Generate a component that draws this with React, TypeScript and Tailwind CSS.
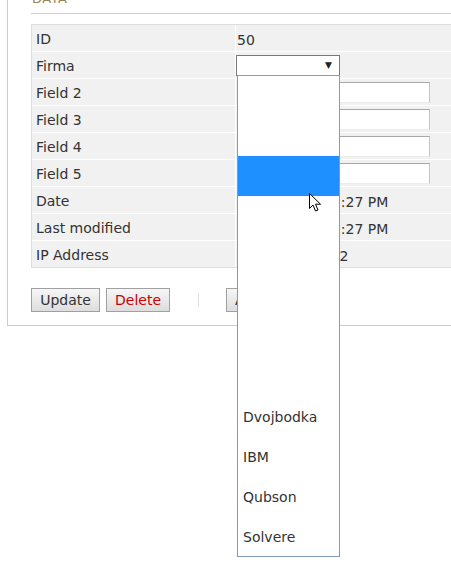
import React from "react";

const rows: { label: string; kind: "text" | "select" | "input" | "date"; value?: string }[] = [
  { label: "ID", kind: "text", value: "50" },
  { label: "Firma", kind: "select" },
  { label: "Field 2", kind: "input" },
  { label: "Field 3", kind: "input" },
  { label: "Field 4", kind: "input" },
  { label: "Field 5", kind: "input" },
  { label: "Date", kind: "date", value: "4/8/2016 9:51:27 PM" },
  { label: "Last modified", kind: "date", value: "4/8/2016 9:51:27 PM" },
  { label: "IP Address", kind: "text", value: "192.168.10.112" },
];

const options = ["", "", "", "", "", "", "", "", "Dvojbodka", "IBM", "Qubson", "Solvere"];

export default function App() {
  return (
    <div className="relative w-[451px] h-[573px] overflow-hidden bg-white font-['DejaVu_Sans',sans-serif] text-[14px] text-[#333]">
      <div className="ml-[7px] mt-[-9px] w-[520px] border-l border-b border-[#cccccc] pl-[23px] pb-[13px]">
        <div className="h-[23px] border-b border-[#d0d0d0] leading-[16px] pl-[1px] tracking-[0.5px] text-[13px] text-[#9c8452]">
          DATA
        </div>
        <div className="mt-[10px] border border-[#dddddd] bg-white">
          <div className="grid grid-cols-[203px_1fr] gap-px bg-white">
            {rows.map((r) => (
              <React.Fragment key={r.label}>
                <div className="h-[26px] bg-[#f1f1f1] pl-[4px] pt-[6px] leading-[16px] whitespace-nowrap">
                  {r.label}
                </div>
                <div className="h-[26px] bg-[#f1f1f1] flex items-center leading-[16px]">
                  {r.kind === "text" && (
                    <span className="pl-[1px] pt-[3px] whitespace-nowrap">{r.value}</span>
                  )}
                  {r.kind === "date" && (
                    <span className="pl-[6px] pt-[3px] whitespace-nowrap">{r.value}</span>
                  )}
                  {r.kind === "select" && (
                    <div className="h-[21px] w-[104px] border border-[#7a7a7a] bg-white flex items-center justify-end pr-[7px]">
                      <span className="text-[9px] leading-none text-[#222]">▼</span>
                    </div>
                  )}
                  {r.kind === "input" && (
                    <div className="ml-[4px] h-[21px] w-[190px] border border-[#c4c4c4] border-t-[#a8a8a8] border-b-[#ececec] bg-white" />
                  )}
                </div>
              </React.Fragment>
            ))}
          </div>
        </div>
        <div className="mt-[20px] flex items-center">
          <button className="h-[24px] w-[69px] border border-[#a0a0a0] bg-gradient-to-b from-[#f6f6f6] to-[#dddddd] text-[#333] leading-[16px]">
            Update
          </button>
          <button className="ml-[6px] h-[24px] w-[64px] border border-[#a0a0a0] bg-gradient-to-b from-[#f6f6f6] to-[#dddddd] text-[#cc0000] leading-[16px]">
            Delete
          </button>
          <span className="ml-[28px] h-[14px] w-px bg-[#e0e0e0]" />
          <button className="ml-[27px] h-[24px] px-[8px] border border-[#a0a0a0] bg-gradient-to-b from-[#f6f6f6] to-[#dddddd] text-[#333] leading-[16px]">
            Add new
          </button>
        </div>
      </div>

      <div className="absolute left-[237px] top-[75px] w-[103px] border border-[#7f9db9] bg-white">
        {options.map((o, i) => (
          <div
            key={i}
            className={
              i === 2
                ? "h-[40px] bg-[#1e90ff] pl-[5px] flex items-center"
                : "h-[40px] bg-white pl-[5px] pt-[2px] flex items-center text-[#333]"
            }
          >
            {o}
          </div>
        ))}
      </div>

      <svg
        className="absolute left-[309px] top-[193px]"
        width="13"
        height="20"
        viewBox="0 0 13 20"
      >
        <path
          d="M0.5 0.5 L0.5 15.5 L4 12 L6.5 18 L9 17 L6.5 11.2 L11.5 11.2 Z"
          fill="white"
          stroke="black"
          strokeWidth="1"
          strokeLinejoin="miter"
        />
      </svg>
    </div>
  );
}
